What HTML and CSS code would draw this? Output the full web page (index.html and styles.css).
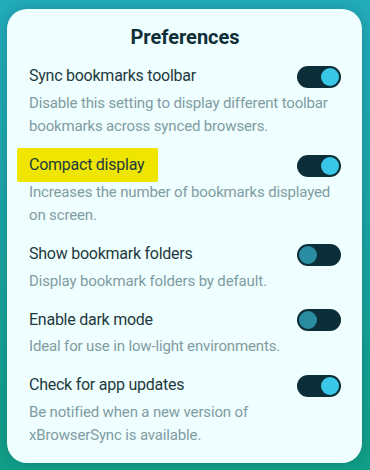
FILE: index.html
```html
<!DOCTYPE html>
<html>
<head>
<meta charset="utf-8">
<link rel="stylesheet" href="styles.css">
</head>
<body>
<div class="card">
  <h1 class="title">Preferences</h1>
  <div class="list">
    <div class="row">
      <div class="label">Sync bookmarks toolbar</div>
      <div class="toggle on"><span class="knob"></span></div>
      <div class="desc">Disable this setting to display different toolbar bookmarks across synced browsers.</div>
    </div>
    <div class="row">
      <div class="label"><span class="hl">Compact display</span></div>
      <div class="toggle on"><span class="knob"></span></div>
      <div class="desc">Increases the number of bookmarks displayed on screen.</div>
    </div>
    <div class="row">
      <div class="label">Show bookmark folders</div>
      <div class="toggle"><span class="knob"></span></div>
      <div class="desc">Display bookmark folders by default.</div>
    </div>
    <div class="row">
      <div class="label">Enable dark mode</div>
      <div class="toggle"><span class="knob"></span></div>
      <div class="desc">Ideal for use in low-light environments.</div>
    </div>
    <div class="row">
      <div class="label">Check for app updates</div>
      <div class="toggle on"><span class="knob"></span></div>
      <div class="desc">Be notified when a new version of xBrowserSync is available.</div>
    </div>
  </div>
</div>
</body>
</html>
```

FILE: styles.css
```css
html, body {
  margin: 0;
  height: 100%;
}
body {
  box-sizing: border-box;
  padding: 9px 8px 7px 7px;
  background: linear-gradient(180deg, #23aebd 0%, #1aa7a6 50%, #10a088 100%);
  font-family: Roboto, "Noto Sans", sans-serif;
}
.card {
  box-sizing: border-box;
  height: 454px;
  background: #effefe;
  border-radius: 20px;
  padding: 14px 21px 15px 22px;
  box-shadow: 0 0 16px rgba(0, 40, 50, 0.25);
}
.title {
  margin: 0 0 13px;
  text-align: center;
  font-size: 20px;
  line-height: 28px;
  font-weight: 700;
  color: #0e2f38;
}
.list {
  display: flex;
  flex-direction: column;
  gap: 14.5px;
}
.row {
  display: grid;
  grid-template-columns: 1fr auto;
  align-items: start;
}
.label {
  grid-column: 1;
  font-size: 16px;
  letter-spacing: -0.25px;
  line-height: 24px;
  color: #1e3a40;
}
.hl {
  display: inline-block;
  background: #eee600;
  padding: 5px 14px 5px 12px;
  margin: -5px -14px -5px -12px;
  border-radius: 2px;
  line-height: 24px;
}
.desc {
  grid-column: 1 / span 2;
  margin-top: 3.5px;
  font-size: 15px;
  letter-spacing: -0.15px;
  line-height: 23.5px;
  color: #7f9ca3;
}
.toggle {
  grid-column: 2;
  width: 44px;
  height: 22px;
  margin-top: 1.5px;
  border-radius: 11px;
  background: #0b2e38;
  display: flex;
  align-items: center;
  padding: 0 2px;
  box-sizing: border-box;
}
.knob {
  width: 18px;
  height: 18px;
  border-radius: 50%;
  background: #2a8ca0;
}
.toggle.on {
  justify-content: flex-end;
}
.toggle.on .knob {
  background: #3ac6e6;
}
```
